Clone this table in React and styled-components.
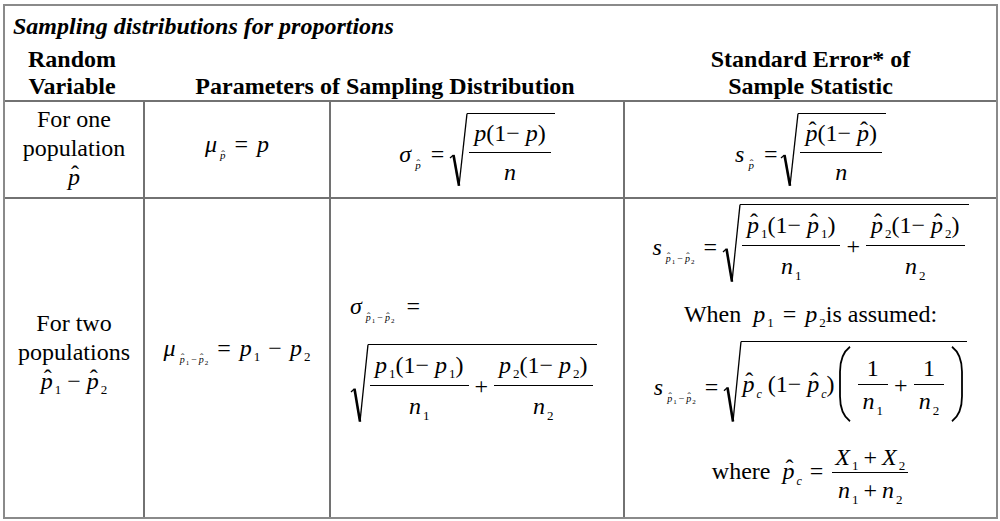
import React from 'react'
import styled, { createGlobalStyle } from 'styled-components'

const SERIF = '"Liberation Serif", "Times New Roman", serif'

const GlobalStyle = createGlobalStyle`
  html, body { margin: 0; padding: 0; background: #fff; }
  body {
    font-family: ${SERIF};
    color: #000;
  }
`

const LINE = '#727272'

const Table = styled.div`
  display: grid;
  grid-template-columns: 140px 186px 294px 1fr;
  grid-template-rows: 40px 56px 97px 318px;
  box-sizing: border-box;
  width: 995px;
  margin: 4px 0 0 3px;
  border: 2px solid #8a8a8a;
  background: #fff;
  font-family: ${SERIF};
`

const Caption = styled.div`
  grid-column: 1 / -1;
  padding: 7px 0 0 8px;
  font-size: 24px;
  line-height: 27px;
  font-weight: bold;
  font-style: italic;
`

const HeadCell = styled.div`
  grid-column: span ${p => p.$span || 1};
  display: flex;
  flex-direction: column;
  justify-content: flex-end;
  padding-right: ${p => p.$shift || 0}px;
  text-align: center;
  font-size: 24px;
  line-height: 27px;
  font-weight: bold;
  border-bottom: 2px solid ${LINE};
`

const Cell = styled.div`
  display: flex;
  flex-direction: column;
  align-items: ${p => p.$align || 'center'};
  justify-content: ${p => p.$justify || 'center'};
  gap: ${p => p.$gap || 0}px;
  padding: ${p => p.$pad || '0'};
  border-right: ${p => (p.$last ? 'none' : `2px solid ${LINE}`)};
  border-bottom: ${p => (p.$bottom ? `2px solid ${LINE}` : 'none')};
  font-size: 24px;
  line-height: 29px;
  text-align: center;
  min-width: 0;
`

const Label = styled.div`
  white-space: nowrap;
`

const Formula = styled.div`
  white-space: nowrap;
  font-size: 24px;
  line-height: ${p => p.$lh || 29}px;
  margin-top: ${p => p.$mt || 0}px;
`

const I = styled.i`
  font-style: italic;
`

const Run = styled.span`
  white-space: nowrap;
  line-height: 24px;
`

const Op = styled.span`
  margin: 0 ${p => p.$r ?? p.$m ?? 7}px 0 ${p => p.$l ?? p.$m ?? 7}px;
`

const Sub = styled.span`
  font-size: ${p => p.$size}px;
  font-style: ${p => (p.$italic ? 'italic' : 'normal')};
  vertical-align: ${p => -p.$drop}px;
  line-height: 0;
  margin-left: ${p => p.$gap ?? 1}px;
`

const HatBox = styled.span`
  position: relative;
  display: inline-block;
  font-style: italic;
  line-height: 1;
`

const HatMark = styled.span`
  position: absolute;
  left: 50%;
  top: -0.12em;
  transform: translateX(-38%);
  font-style: normal;
`

const Hat = ({ children }) => (
  <HatBox>
    {children}
    <HatMark>ˆ</HatMark>
  </HatBox>
)

// italic variable, optionally hatted, with an optional subscript
const V = ({ hat, c = 'p', sub, size = 13, drop = 5, gap = 2, italic }) => (
  <>
    {hat ? <Hat>{c}</Hat> : <I>{c}</I>}
    {sub != null && (
      <Sub $size={size} $drop={drop} $gap={gap} $italic={italic}>
        {sub}
      </Sub>
    )}
  </>
)

const DiffSub = ({ size = 10, drop = 7 }) => (
  <Sub $size={size} $drop={drop} $gap={4}>
    <Hat>p</Hat>
    <Sub $size={7} $drop={2} $gap={1}>1</Sub>
    <Op $m={2}>−</Op>
    <Hat>p</Hat>
    <Sub $size={7} $drop={2} $gap={1}>2</Sub>
  </Sub>
)

const FracBox = styled.span`
  display: inline-flex;
  flex-direction: column;
  vertical-align: middle;
  text-align: center;
  margin: 0 ${p => p.$m ?? 1}px;
  line-height: 24px;
`

const Num = styled.span`
  padding: ${p => p.$pad || '3px 5px 7px'};
  border-bottom: 1.5px solid #000;
`

const Den = styled.span`
  padding: ${p => p.$pad || '7px 5px 2px'};
`

const Frac = ({ num, den, m, numPad, denPad }) => (
  <FracBox $m={m}>
    <Num $pad={numPad}>{num}</Num>
    <Den $pad={denPad}>{den}</Den>
  </FracBox>
)

const SUB_NUM = '4px 5px 8px'
const SUB_DEN = '8px 5px 4px'

const SqrtBox = styled.span`
  position: relative;
  display: inline-flex;
  align-items: stretch;
  vertical-align: middle;
  padding-left: 18px;
  margin-bottom: ${p => p.$lift || 0}px;
`

// the radical sign is drawn over the left padding of the box
const Radical = styled.svg`
  position: absolute;
  left: 0;
  top: 0;
  width: 18px;
  height: 100%;
  overflow: visible;
`

const Radicand = styled.span`
  display: inline-flex;
  align-items: center;
  border-top: 1.6px solid #000;
  padding: ${p => p.$pad || '4px 3px 2px 1px'};
`

const Sqrt = ({ children, lift, pad }) => (
  <SqrtBox $lift={lift}>
    <Radical viewBox="0 0 18 100" preserveAspectRatio="none">
      <path d="M1 60 L4.5 56" fill="none" stroke="#000" strokeWidth="1.3" vectorEffect="non-scaling-stroke" />
      <path d="M4.5 56 L10 97" fill="none" stroke="#000" strokeWidth="2.6" vectorEffect="non-scaling-stroke" />
      <path d="M10 97 L18 0.8" fill="none" stroke="#000" strokeWidth="1.3" vectorEffect="non-scaling-stroke" />
    </Radical>
    <Radicand $pad={pad}>{children}</Radicand>
  </SqrtBox>
)

const ParenGroup = styled.span`
  position: relative;
  display: inline-flex;
  align-items: center;
  margin-left: 3px;
  padding: 10px 19px 9px;
`

const ParenSvg = styled.svg`
  position: absolute;
  top: 0;
  ${p => (p.$right ? 'right: 0;' : 'left: 0;')}
  width: 15px;
  height: 100%;
  overflow: visible;
`

const Paren = ({ right }) => (
  <ParenSvg $right={right} viewBox="0 0 15 100" preserveAspectRatio="none">
    <path
      d={right ? 'M3 1 C10 8 13 20 13 34 L13 66 C13 80 10 92 3 99' : 'M12 1 C5 8 2 20 2 34 L2 66 C2 80 5 92 12 99'}
      fill="none"
      stroke="#000"
      strokeWidth="1.8"
      vectorEffect="non-scaling-stroke"
    />
  </ParenSvg>
)

const Plus = styled.span`
  margin: 0 ${p => p.$m ?? 5}px;
`

const Word = styled.span`
  margin-right: ${p => p.$r || 0}px;
`

const App = () => (
  <>
    <GlobalStyle />
    <Table>
      <Caption>Sampling distributions for proportions</Caption>

      <HeadCell $shift={6}>
        Random
        <br />
        Variable
      </HeadCell>
      <HeadCell $span={2}>Parameters of Sampling Distribution</HeadCell>
      <HeadCell>
        Standard Error* of
        <br />
        Sample Statistic
      </HeadCell>

      {/* one population */}
      <Cell $bottom $pad="0 0 2px">
        <Label>For one</Label>
        <Label>population</Label>
        <Label>
          <Hat>p</Hat>
        </Label>
      </Cell>
      <Cell $bottom $pad="0 0 8px">
        <Formula>
          <I>μ</I>
          <Sub $size={11} $drop={7} $gap={3}>
            <Hat>p</Hat>
          </Sub>
          <Op $m={9}>=</Op>
          <I>p</I>
        </Formula>
      </Cell>
      <Cell $bottom $justify="flex-start" $pad="11px 0 0">
        <Formula $lh={24}>
          <I>σ</I>
          <Sub $size={11} $drop={7} $gap={4}>
            <Hat>p</Hat>
          </Sub>
          <Op $l={10} $r={5}>=</Op>
          <Sqrt lift={11}>
            <Frac
              num={
                <>
                  <I>p</I>(1− <I>p</I>)
                </>
              }
              den={<I>n</I>}
            />
          </Sqrt>
        </Formula>
      </Cell>
      <Cell $bottom $last $justify="flex-start" $pad="11px 0 0">
        <Formula $lh={24}>
          <I>s</I>
          <Sub $size={11} $drop={7} $gap={4}>
            <Hat>p</Hat>
          </Sub>
          <Op $l={10} $r={3}>=</Op>
          <Sqrt lift={11}>
            <Frac
              num={
                <>
                  <Hat>p</Hat>(1− <Hat>p</Hat>)
                </>
              }
              den={<I>n</I>}
            />
          </Sqrt>
        </Formula>
      </Cell>

      {/* two populations */}
      <Cell $pad="0 0 12px">
        <Label>For two</Label>
        <Label>populations</Label>
        <Label>
          <V hat sub="1" />
          <Op $m={6}>−</Op>
          <V hat sub="2" />
        </Label>
      </Cell>
      <Cell $pad="0 0 18px">
        <Formula>
          <I>μ</I>
          <DiffSub />
          <Op $m={9}>=</Op>
          <V sub="1" />
          <Op $m={8}>−</Op>
          <V sub="2" />
        </Formula>
      </Cell>
      <Cell $align="flex-start" $justify="flex-start" $pad="93px 0 0 19px" $gap={21}>
        <Formula>
          <I>σ</I>
          <DiffSub />
          <Op $m={12}>=</Op>
        </Formula>
        <Formula $lh={24}>
          <Sqrt>
            <Frac
              num={
                <>
                  <V sub="1" />
                  (1− <V sub="1" />)
                </>
              }
              den={<V c="n" sub="1" drop={6} />}
              numPad={SUB_NUM}
              denPad={SUB_DEN}
            />
            <Plus>+</Plus>
            <Frac
              num={
                <>
                  <V sub="2" />
                  (1− <V sub="2" />)
                </>
              }
              den={<V c="n" sub="2" drop={6} />}
              numPad={SUB_NUM}
              denPad={SUB_DEN}
            />
          </Sqrt>
        </Formula>
      </Cell>
      <Cell $last $justify="flex-start" $pad="5px 0 0">
        <Formula $lh={24}>
          <I>s</I>
          <DiffSub />
          <Op $l={9} $r={5}>=</Op>
          <Sqrt lift={10}>
            <Frac
              num={
                <>
                  <V hat sub="1" />
                  (1− <V hat sub="1" />)
                </>
              }
              den={<V c="n" sub="1" drop={6} />}
              numPad={SUB_NUM}
              denPad={SUB_DEN}
            />
            <Plus>+</Plus>
            <Frac
              num={
                <>
                  <V hat sub="2" />
                  (1− <V hat sub="2" />)
                </>
              }
              den={<V c="n" sub="2" drop={6} />}
              numPad={SUB_NUM}
              denPad={SUB_DEN}
            />
          </Sqrt>
        </Formula>
        <Formula $mt={6}>
          <Word $r={12}>When</Word>
          <V sub="1" />
          <Op $m={9}>=</Op>
          <V sub="2" />
          is assumed:
        </Formula>
        <Formula $lh={24} $mt={12}>
          <I>s</I>
          <DiffSub />
          <Op $l={9} $r={5}>=</Op>
          <Sqrt lift={13}>
            <Run>
              <V hat c="p" sub="c" size={12} drop={6} italic />
              &nbsp;(1− <V hat c="p" sub="c" size={12} drop={6} italic />)
            </Run>
            <ParenGroup>
              <Paren />
              <Frac num="1" den={<V c="n" sub="1" drop={6} />} numPad="0 5px 4px" denPad="4px 5px 0" />
              <Plus>+</Plus>
              <Frac num="1" den={<V c="n" sub="2" drop={6} />} numPad="0 5px 4px" denPad="4px 5px 0" />
              <Paren right />
            </ParenGroup>
          </Sqrt>
        </Formula>
        <Formula $lh={24} $mt={8}>
          <Word $r={12}>where</Word>
          <V hat sub="c" size={12} drop={6} italic />
          <Op $m={8}>=</Op>
          <Frac
            num={
              <>
                <V c="X" sub="1" />
                <Plus>+</Plus>
                <V c="X" sub="2" />
              </>
            }
            den={
              <>
                <V c="n" sub="1" drop={6} />
                <Plus>+</Plus>
                <V c="n" sub="2" drop={6} />
              </>
            }
            numPad="0 3px 3px"
            denPad="5px 3px 0"
          />
        </Formula>
      </Cell>
    </Table>
  </>
)

export default App
